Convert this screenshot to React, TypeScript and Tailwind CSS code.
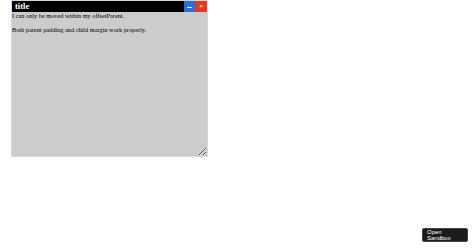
export default function App() {
  return (
    <div className="relative w-[474px] h-[248px] bg-white" style={{ fontFamily: '"Liberation Serif", serif' }}>
      <div className="ml-[11px] w-[197px] h-[157px] bg-[#cccccc] border border-[#d8d8d8] overflow-hidden resize flex flex-col">
        <div className="flex h-[11px] bg-black shrink-0">
          <div className="flex-1 pl-[3px] text-white font-bold text-[8.5px] leading-[11px]">title</div>
          <button className="w-[11px] h-[11px] bg-[#2a6fdc] flex items-center justify-center">
            <span className="block w-[5px] h-px bg-white mt-[1px]" />
          </button>
          <button className="w-[12px] h-[11px] bg-[#e4391f] text-white text-[6px] leading-[11px] flex items-center justify-center" style={{ fontFamily: '"Liberation Sans", sans-serif' }}>
            ×
          </button>
        </div>
        <div className="text-black text-[6.3px] leading-[7px]">
          <p>I can only be moved within my offsetParent.</p>
          <p className="mt-[6.5px]">Both parent padding and child margin work properly.</p>
        </div>
      </div>
      <button
        className="absolute left-[422px] top-[228px] w-[46px] h-[14px] bg-[#1b1b1b] rounded-[2px] text-left pl-[4px] text-white text-[6px] leading-[6px] border border-[#444]"
        style={{ fontFamily: '"Liberation Sans", sans-serif' }}
      >
        Open
        <br />
        Sandbox
      </button>
    </div>
  )
}
